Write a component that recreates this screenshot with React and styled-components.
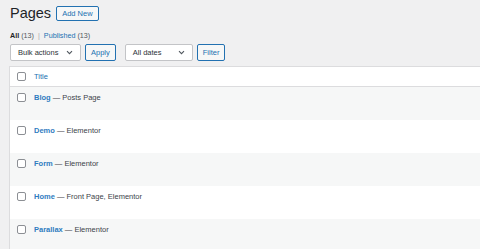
import React from 'react'
import styled, { createGlobalStyle } from 'styled-components'

const GlobalStyle = createGlobalStyle`
  html, body {
    margin: 0;
    padding: 0;
    background: #f0f0f1;
    font-family: "Liberation Sans", Arial, sans-serif;
    color: #1d2327;
  }
`

const pages = [
  { title: 'Blog', state: 'Posts Page' },
  { title: 'Demo', state: 'Elementor' },
  { title: 'Form', state: 'Elementor' },
  { title: 'Home', state: 'Front Page, Elementor' },
  { title: 'Parallax', state: 'Elementor' },
]

const Chevron = () => (
  <svg width="7" height="5" viewBox="0 0 7 5">
    <path d="M1 1.2 L3.5 3.7 L6 1.2" fill="none" stroke="#50575e" strokeWidth="1.1" />
  </svg>
)

const App = () => {
  return (
    <Wrap>
      <GlobalStyle />
      <Heading>
        <Title>Pages</Title>
        <OutlineButton>Add New</OutlineButton>
      </Heading>
      <Filters>
        <Current>All</Current> <Count>(13)</Count>
        <Sep>|</Sep>
        <FilterLink>Published</FilterLink> <Count>(13)</Count>
      </Filters>
      <TableNav>
        <Select width={71}>Bulk actions<Chevron /></Select>
        <OutlineButton tall>Apply</OutlineButton>
        <Select width={68} spaced>All dates<Chevron /></Select>
        <OutlineButton tall>Filter</OutlineButton>
      </TableNav>
      <Table>
        <HeadRow>
          <Check />
          <HeadLabel>Title</HeadLabel>
        </HeadRow>
        {pages.map((p, i) => (
          <Row key={p.title} striped={i % 2 === 0}>
            <Check />
            <RowTitle>
              <PageLink>{p.title}</PageLink>
              <State> — {p.state}</State>
            </RowTitle>
          </Row>
        ))}
      </Table>
    </Wrap>
  )
}
export default App

const Wrap = styled.div`
  width: 480px;
  height: 249px;
  overflow: hidden;
  padding-top: 6px;
  box-sizing: border-box;
`
const Heading = styled.div`
  display: flex;
  align-items: center;
  gap: 5px;
  padding-left: 10px;
`
const Title = styled.h1`
  margin: 0;
  font-size: 14.5px;
  font-weight: 400;
  color: #1d2327;
  line-height: 15px;
`
const OutlineButton = styled.span`
  display: inline-flex;
  align-items: center;
  justify-content: center;
  box-sizing: border-box;
  height: ${p => (p.tall ? '17px' : '15px')};
  padding: 0 5px;
  border: 1px solid #2271b1;
  border-radius: 2px;
  background: #f6f7f7;
  color: #2271b1;
  font-size: 7.5px;
`
const Filters = styled.div`
  margin-top: 10px;
  padding-left: 10px;
  font-size: 7.2px;
  line-height: 9px;
  color: #50575e;
`
const Current = styled.span`
  color: #1d2327;
  font-weight: 700;
`
const Count = styled.span`
  color: #50575e;
`
const Sep = styled.span`
  margin: 0 4px;
  color: #a7aaad;
`
const FilterLink = styled.span`
  color: #2271b1;
`
const TableNav = styled.div`
  display: flex;
  align-items: center;
  gap: 4px;
  margin-top: 4px;
  padding-left: 10px;
`
const Select = styled.div`
  display: flex;
  align-items: center;
  justify-content: space-between;
  box-sizing: border-box;
  width: ${p => p.width}px;
  height: 17px;
  margin-left: ${p => (p.spaced ? '5px' : '0')};
  padding: 0 7px 0 7px;
  border: 1px solid #c3c4c7;
  border-radius: 2px;
  background: #fff;
  color: #2c3338;
  font-size: 7.5px;
`
const Table = styled.div`
  margin: 5px 0 0 9px;
  background: #fff;
  border-left: 1px solid #dcdcde;
  border-top: 1px solid #dcdcde;
`
const HeadRow = styled.div`
  display: flex;
  align-items: center;
  height: 20px;
  box-sizing: border-box;
  padding-left: 7px;
  border-bottom: 1px solid #dcdcde;
`
const HeadLabel = styled.span`
  margin-left: 8px;
  font-size: 7.5px;
  color: #2271b1;
`
const Row = styled.div`
  display: flex;
  align-items: flex-start;
  height: 33px;
  box-sizing: border-box;
  padding: 6px 0 0 7px;
  background: ${p => (p.striped ? '#f6f7f7' : '#fff')};
`
const Check = styled.span`
  display: block;
  flex: none;
  width: 9px;
  height: 9px;
  box-sizing: border-box;
  border: 1px solid #8c8f94;
  border-radius: 2px;
  background: #fff;
`
const RowTitle = styled.div`
  margin-left: 8px;
  font-size: 7.5px;
  line-height: 11px;
  margin-top: -1px;
`
const PageLink = styled.span`
  color: #2f7cbf;
  font-weight: 700;
`
const State = styled.span`
  color: #3c434a;
`
